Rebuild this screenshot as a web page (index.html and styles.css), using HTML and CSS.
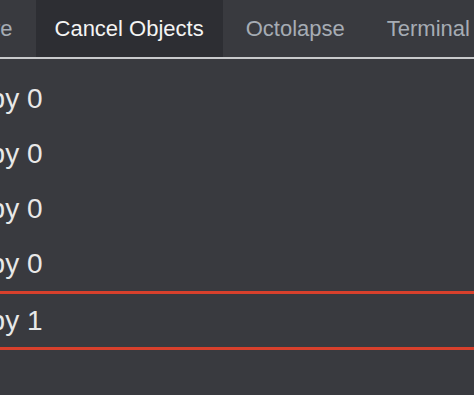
FILE: index.html
```html
<!DOCTYPE html>
<html lang="en">

<head>
    <meta charset="UTF-8">
    <meta name="viewport" content="width=device-width, initial-scale=1.0">
    <title>Cancel Objects</title>
    <link rel="stylesheet" href="styles.css">
</head>

<body>
    <div id="tabs">
        <span class="tab">Temperature</span>
        <span class="tab active">Cancel Objects</span>
        <span class="tab">Octolapse</span>
        <span class="tab">Terminal</span>
    </div>
    <div id="objects">
        <div class="row">copy 0</div>
        <div class="row">copy 0</div>
        <div class="row">copy 0</div>
        <div class="row">copy 0</div>
        <div class="row selected">copy 1</div>
    </div>
</body>

</html>
```

FILE: styles.css
```css
html,
body {
    margin: 0;
    padding: 0;
    height: 100%;
    overflow: hidden;
    background: #393a3f;
    font-family: "Liberation Sans", Arial, sans-serif;
}

#tabs {
    display: flex;
    gap: 4px;
    height: 57px;
    margin-left: -130px;
    border-bottom: 2px solid #c9cacc;
    white-space: nowrap;
}

#tabs .tab {
    padding: 0 19px;
    line-height: 57px;
    font-size: 22px;
    color: #a6acb4;
}

#tabs .active {
    background: #2d2e33;
    color: #f4f4f4;
}

#objects {
    padding-top: 12px;
}

.row {
    height: 55px;
    line-height: 55px;
    font-size: 28px;
    color: #e8e8e8;
    text-indent: -40px;
    white-space: nowrap;
}

.row.selected {
    height: 53px;
    line-height: 53px;
    border-top: 3px solid #d8402c;
    border-bottom: 3px solid #d8402c;
}
```
